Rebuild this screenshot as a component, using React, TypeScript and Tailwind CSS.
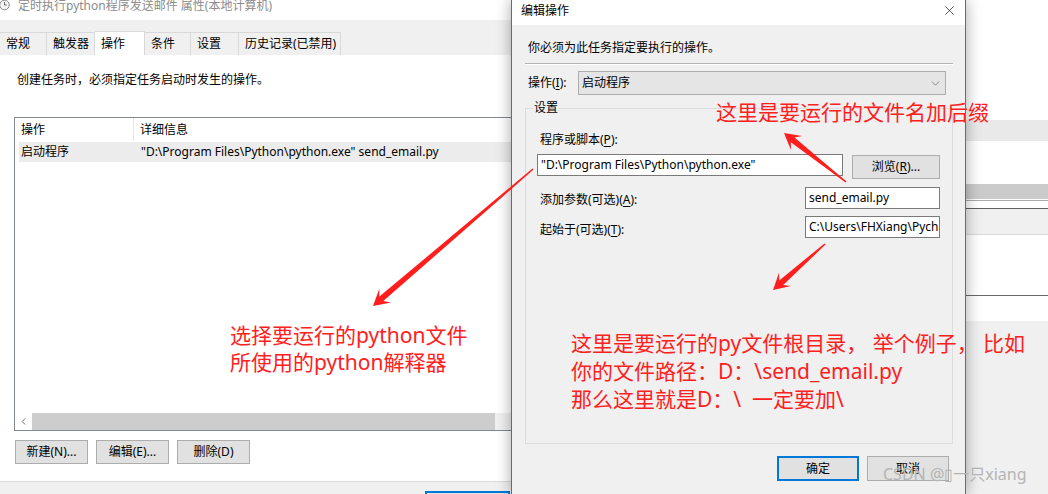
import { ChevronDown, ChevronLeft, X } from 'lucide-react';

type Pt = [number, number];

// red screenshot-tool arrows: [tail, tip]
const arrows: [Pt, Pt][] = [
  [[846, 182], [784, 133]],
  [[825, 244], [773, 290]],
  [[533, 169], [373, 306]],
];

function arrowPoints(tail: Pt, tip: Pt) {
  const dx = tip[0] - tail[0];
  const dy = tip[1] - tail[1];
  const len = Math.hypot(dx, dy);
  const ux = dx / len;
  const uy = dy / len;
  const at = (along: number, side: number) => {
    const x = tip[0] - ux * along - uy * side;
    const y = tip[1] - uy * along + ux * side;
    return `${x.toFixed(1)},${y.toFixed(1)}`;
  };
  return [at(len, 0.8), at(11, 3), at(16, 9), at(0, 0), at(16, -9), at(11, -3), at(len, -0.8)].join(' ');
}

const tabs = [
  { label: '常规', w: 'w-[47px]' },
  { label: '触发器', w: 'w-[48px]' },
  { label: '操作', w: 'w-[50px]', active: true },
  { label: '条件', w: 'w-[46px]' },
  { label: '设置', w: 'w-[48px]' },
  { label: '历史记录(已禁用)', w: 'w-[102px]' },
];

function ClockIcon() {
  return (
    <svg width="12" height="12" viewBox="0 0 12 12" className="-ml-[1px] -mt-[1px] shrink-0">
      <circle cx="5.5" cy="6" r="4.8" fill="#f4f4f4" stroke="#8a8a8a" strokeWidth="1" />
      <path d="M5.5 3v3h2.2" fill="none" stroke="#6a6a6a" strokeWidth="1" />
    </svg>
  );
}

function PropertiesWindow() {
  return (
    <div className="w-[965px] shrink-0 flex flex-col">
      {/* Title bar (inactive) */}
      <div className="h-[20px] shrink-0 bg-white flex items-start gap-[7px]">
        <ClockIcon />
        <span className="leading-[12px] text-[#8c8c8c]">定时执行python程序发送邮件 属性(本地计算机)</span>
      </div>

      {/* Tabs */}
      <div className="h-[35px] shrink-0 bg-[#f0f0f0] flex items-end">
        {tabs.map((t) =>
          t.active ? (
            <div key={t.label} className={`${t.w} h-[24px] bg-white border-t border-r border-[#d9d9d9] pl-[6px] pt-[4px] leading-[16px]`}>
              {t.label}
            </div>
          ) : (
            <div key={t.label} className={`${t.w} h-[23px] border-t border-r border-[#d9d9d9] pl-[6px] flex items-center leading-[16px]`}>
              {t.label}
            </div>
          )
        )}
      </div>

      {/* Tab page */}
      <div className="h-[427px] shrink-0 bg-white border-b border-[#dadada] flex flex-col">
        <p className="pt-[17px] pl-[17px] leading-[16px]">创建任务时，必须指定任务启动时发生的操作。</p>

        <div className="ml-[14px] mr-[14px] mt-[29px] h-[314px] shrink-0 border border-[#828790] flex flex-col">
          <div className="h-[23px] shrink-0 flex">
            <div className="w-[119px] border-r border-[#e5e5e5] pl-[6px] flex items-center">操作</div>
            <div className="pl-[6px] flex items-center">详细信息</div>
          </div>
          <div className="flex-1 pt-[1px] pl-[4px]">
            <div className="h-[20px] bg-[#ececec] flex items-center">
              <div className="w-[122px] pl-[2px]">启动程序</div>
              <div>{'"D:\\Program Files\\Python\\python.exe" send_email.py'}</div>
            </div>
          </div>
          <div className="h-[17px] shrink-0 flex">
            <div className="w-[17px] flex items-center justify-center text-[#606060]">
              <ChevronLeft size={11} strokeWidth={2} />
            </div>
            <div className="w-[463px] bg-[#cdcdcd]" />
            <div className="flex-1 bg-[#f0f0f0]" />
          </div>
        </div>

        <div className="mt-[9px] ml-[15px] flex gap-[8px]">
          <button className="w-[73px] h-[24px] bg-[#e1e1e1] border border-[#adadad]">新建(N)...</button>
          <button className="w-[73px] h-[24px] bg-[#e1e1e1] border border-[#adadad]">编辑(E)...</button>
          <button className="w-[73px] h-[24px] bg-[#e1e1e1] border border-[#adadad]">删除(D)</button>
        </div>
      </div>

      <div className="h-[12px] shrink-0 overflow-hidden bg-[#f0f0f0] pt-[9px] pl-[425px]">
        <div className="w-[85px] h-[24px] border-2 border-[#0078d7] bg-[#e1e1e1]" />
      </div>
    </div>
  );
}

function BehindStrip() {
  return (
    <div className="flex-1 flex flex-col">
      <div className="h-[120px] shrink-0 bg-white" />
      <div className="h-[21px] shrink-0 bg-[#e9e9e9]" />
      <div className="h-[43px] shrink-0 bg-white" />
      <div className="h-[15px] shrink-0 bg-[#cbcbcb]" />
      <div className="h-[1px] shrink-0 bg-white" />
      <div className="h-[9px] shrink-0 bg-white border-t border-b border-t-[#aaaaaa] border-b-[#5f5f5f]" />
      <div className="h-[25px] shrink-0 bg-[#f0f0f0]" />
      <div className="h-[62px] shrink-0 bg-white border-t border-b border-t-[#dadada] border-b-[#6a6a6a]" />
      <div className="h-[25px] shrink-0 bg-white" />
      <div className="flex-1 bg-[#f0f0f0]" />
    </div>
  );
}

function Key({ k }: { k: string }) {
  return <span className="underline underline-offset-2">{k}</span>;
}

function EditDialog() {
  return (
    <div className="absolute left-[511px] top-0 w-[455px] h-[494px] border-x border-[#6b6b6b] flex flex-col shadow-[0_0_14px_rgba(0,0,0,0.35)]">
      <div className="h-[25px] shrink-0 bg-white flex items-start justify-between pl-[9px] pr-[8px]">
        <span className="pt-[3px] leading-[16px]">编辑操作</span>
        <X size={15} strokeWidth={1} className="mt-[3px]" />
      </div>

      <div className="flex-1 bg-[#f0f0f0] pl-[13px] pr-[12px] flex flex-col">
        <p className="pt-[15px] pl-[3px] leading-[16px]">你必须为此任务指定要执行的操作。</p>
        <div className="mt-[7px] h-[2px] shrink-0 border-t border-b border-t-[#b4b4b4] border-b-white" />

        <div className="mt-[6px] h-[24px] shrink-0 flex items-center">
          <span className="w-[53px] pl-[3px]">
            操作(<Key k="I" />):
          </span>
          <div className="w-[368px] h-[24px] bg-[#e5e5e5] border border-[#acacac] flex items-center justify-between pl-[3px] pr-[3px]">
            <span>启动程序</span>
            <ChevronDown size={13} strokeWidth={1.2} className="text-[#555]" />
          </div>
        </div>

        <div className="mt-[13px] h-[336px] shrink-0 border border-[#dcdcdc] pl-[11px] pr-[12px] flex flex-col">
          <span className="-mt-[9px] -ml-[4px] w-fit px-[1px] bg-[#f0f0f0] leading-[16px]">设置</span>

          <span className="mt-[16px] pl-[3px] leading-[16px]">
            程序或脚本(<Key k="P" />):
          </span>
          <div className="mt-[6px] flex justify-between items-start">
            <div className="w-[306px] h-[22px] bg-white border border-[#7a7a7a] pl-[3px] flex items-center">
              {'"D:\\Program Files\\Python\\python.exe"'}
            </div>
            <button className="mt-[1px] w-[88px] h-[24px] bg-[#e1e1e1] border border-[#adadad]">
              浏览(<Key k="R" />)...
            </button>
          </div>

          <div className="mt-[8px] flex justify-between items-start">
            <span className="pt-[5px] pl-[3px] leading-[16px]">
              添加参数(可选)(<Key k="A" />):
            </span>
            <div className="w-[135px] h-[22px] bg-white border border-[#7a7a7a] pl-[3px] flex items-center">send_email.py</div>
          </div>

          <div className="mt-[7px] flex justify-between items-start">
            <span className="pt-[6px] pl-[3px] leading-[16px]">
              起始于(可选)(<Key k="T" />):
            </span>
            <div className="w-[135px] h-[22px] bg-white border border-[#7a7a7a] pl-[3px] flex items-center overflow-hidden whitespace-nowrap">
              {'C:\\Users\\FHXiang\\PycharmProjects'}
            </div>
          </div>
        </div>

        <div className="mt-[12px] pr-[4px] flex justify-end gap-[8px]">
          <button className="w-[82px] h-[25px] bg-[#e1e1e1] border-2 border-[#0078d7]">确定</button>
          <button className="w-[82px] h-[25px] bg-[#e1e1e1] border border-[#adadad]">取消</button>
        </div>
      </div>
    </div>
  );
}

function Annotations() {
  return (
    <>
      <svg className="absolute inset-0 pointer-events-none" width="1048" height="494">
        {arrows.map(([tail, tip], i) => (
          <polygon key={i} points={arrowPoints(tail, tip)} fill="#ff1e1e" />
        ))}
      </svg>

      <div className="absolute left-[716px] top-[100px] text-[21px] leading-[24px] text-[#ff2020] whitespace-nowrap">
        这里是要运行的文件名加后缀
      </div>

      <div className="absolute left-[230px] top-[322px] text-[21px] leading-[27px] text-[#ff2020] whitespace-nowrap">
        <p>选择要运行的python文件</p>
        <p>所使用的python解释器</p>
      </div>

      <div className="absolute left-[571px] top-[329px] text-[21px] leading-[28px] text-[#ff2020] whitespace-pre">
        <p>这里是要运行的py文件根目录， 举个例子， 比如</p>
        <p>{'你的文件路径：D：\\send_email.py'}</p>
        <p>{'那么这里就是D：\\  一定要加\\'}</p>
      </div>

      <div className="absolute left-[883px] top-[464px] text-[16px] leading-[20px] text-[#b4b4b4] whitespace-nowrap">
        CSDN @▯一只xiang
      </div>
    </>
  );
}

export default function App() {
  return (
    <div className="relative w-[1048px] h-[494px] overflow-hidden bg-white text-[12px] text-black font-['Noto_Sans','Noto_Sans_CJK_SC',sans-serif]">
      <div className="flex h-full">
        <PropertiesWindow />
        <BehindStrip />
      </div>
      <EditDialog />
      <Annotations />
    </div>
  );
}
